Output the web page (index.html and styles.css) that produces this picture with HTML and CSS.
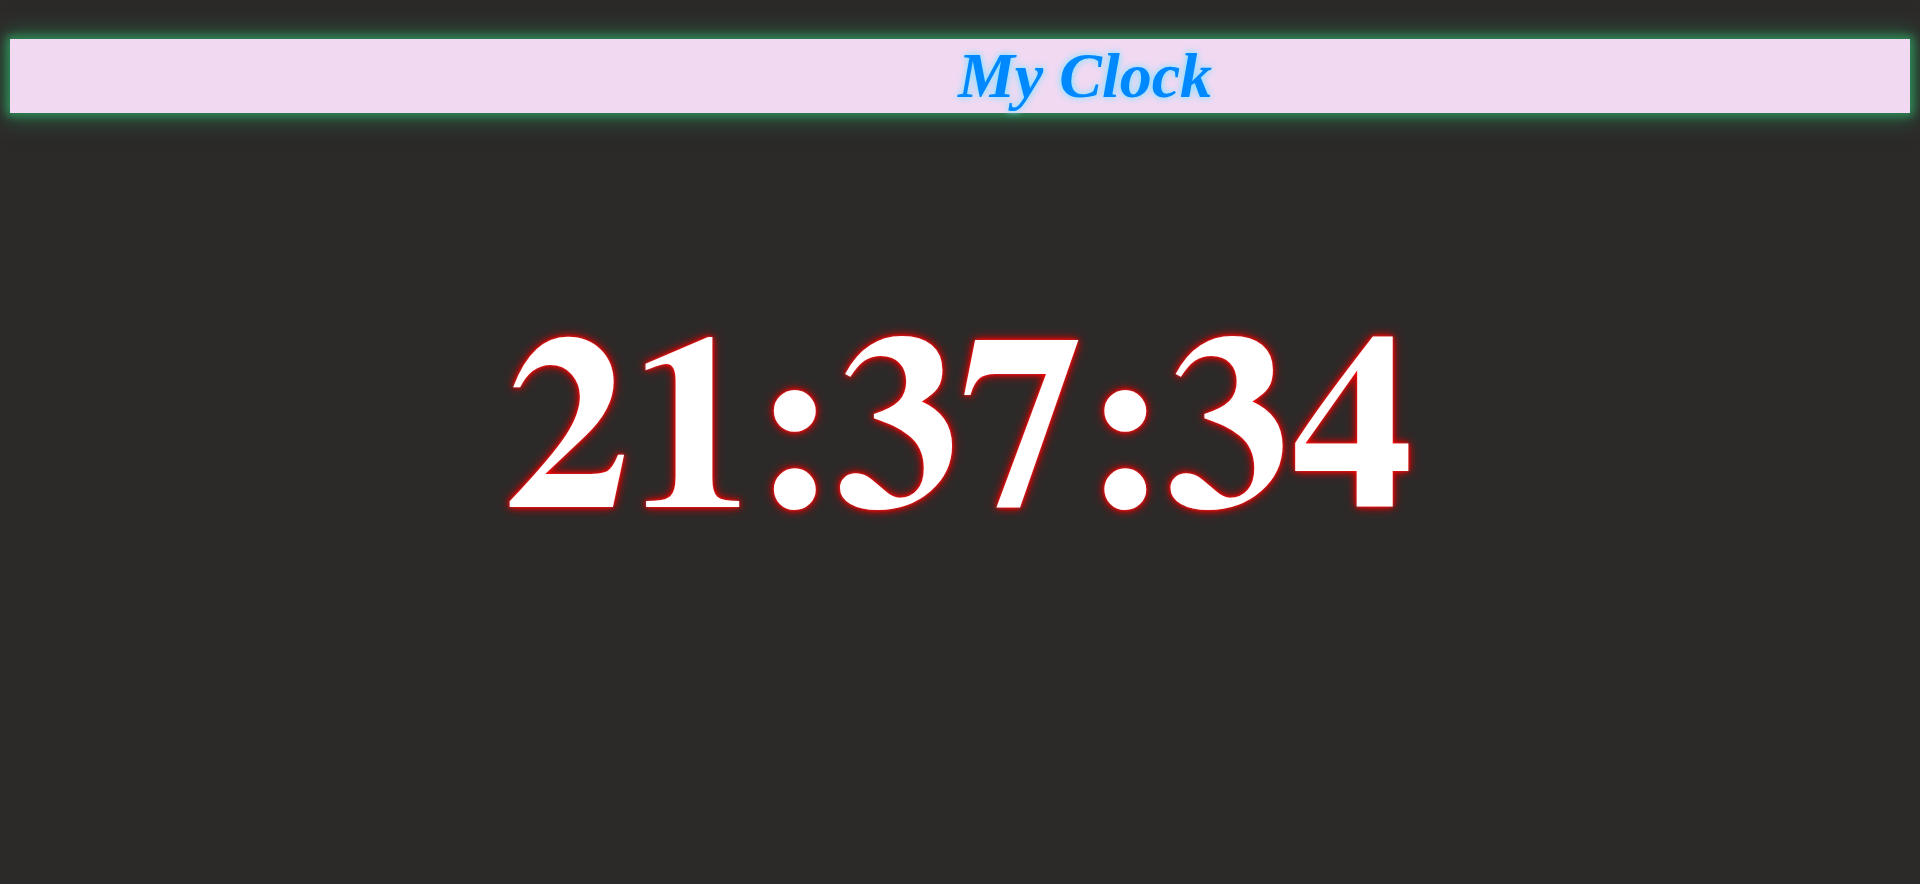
FILE: index.html
```html
<!DOCTYPE html>
<html lang="en">
<head>
<meta charset="utf-8">
<title>My Clock</title>
<link rel="stylesheet" href="styles.css">
</head>
<body>
<header class="header">
  <h1 class="title">My Clock</h1>
</header>
<main class="main">
  <div class="clock">21:37:34</div>
</main>
</body>
</html>
```
FILE: styles.css
```css
html, body {
  margin: 0;
  padding: 0;
  height: 100%;
}
body {
  background: #2c2a29;
  font-family: "Liberation Serif", "Times New Roman", serif;
  overflow: hidden;
}
.header {
  margin: 39px 10px 0;
  background: #f2d9f2;
  box-shadow: 0 0 8px 3px #2e8b57, 0 0 22px 5px rgba(46, 139, 87, 0.6);
}
.title {
  margin: 0;
  padding-left: 250px;
  font-size: 64px;
  line-height: normal;
  font-weight: bold;
  font-style: italic;
  color: #0088ff;
  text-align: center;
  text-shadow: 0 0 8px #7fdcff, 0 0 4px #a8ecff;
}
.main {
  display: flex;
  justify-content: center;
}
.clock {
  margin-top: 196px;
  font-family: "FreeSerif", "Liberation Serif", serif;
  font-size: 248px;
  line-height: 1;
  font-weight: bold;
  color: #ffffff;
  text-shadow: 0 0 3px #ff2020, 0 0 7px #ff0000, 0 0 12px #c00000;
}
```
